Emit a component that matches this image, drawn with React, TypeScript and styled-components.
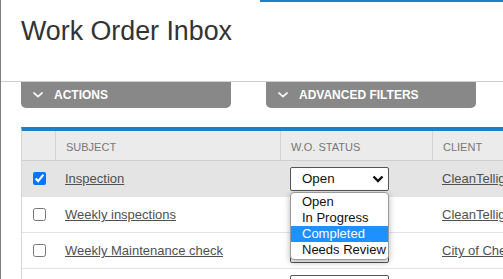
import React from "react";
import styled, { createGlobalStyle } from "styled-components";

const GlobalStyle = createGlobalStyle`
    html, body {
        margin: 0;
        padding: 0;
        background: #fff;
        font-family: "Liberation Sans", Arial, sans-serif;
        overflow: hidden;
    }
`

const Page = styled.div`
    box-sizing: border-box;
    height: 279px;
    border-left: 1px solid #7d7d7d;
    overflow: hidden;
`

const TopStrip = styled.div`
    height: 2px;
    margin-left: 259px;
    background-color: #1e80c4;
`

const Header = styled.div`
    box-sizing: border-box;
    height: 80px;
    padding: 16px 0 0 20px;
    border-bottom: 1px solid #cfcfcf;
`

const Title = styled.h1`
    margin: 0;
    font-size: 26.8px;
    line-height: 27px;
    font-weight: normal;
    color: #333;
`

const ButtonRow = styled.div`
    display: flex;
    gap: 35px;
    padding-left: 20px;
`

const PanelButton = styled.div`
    box-sizing: border-box;
    width: 210px;
    height: 26px;
    display: flex;
    align-items: center;
    gap: 11px;
    padding-left: 12px;
    background-color: #888888;
    border-radius: 0 0 5px 5px;
    color: #fff;
    font-size: 12px;
    font-weight: bold;
`

const Table = styled.div`
    margin: 19px 0 0 20px;
    width: 560px;
    border-top: 4px solid #1e80c4;
    border-left: 1px solid #d6d6d6;
`

const Row = styled.div<{ $head?: boolean; $selected?: boolean }>`
    display: grid;
    grid-template-columns: 33px 225px 152px 1fr;
    height: ${(p) => (p.$head ? "29px" : "35px")};
    border-bottom: 1px solid ${(p) => (p.$head ? "#cfcfcf" : "#e3e3e3")};
    background-color: ${(p) => (p.$head ? "#ebebeb" : p.$selected ? "#e4e4e4" : "#fff")};
`

const HeadCell = styled.div<{ $first?: boolean }>`
    display: flex;
    align-items: center;
    padding: 3px 0 0 10px;
    border-left: ${(p) => (p.$first ? "none" : "1px solid #d4d4d4")};
    font-size: 11px;
    color: #777;
    white-space: nowrap;
`

const Cell = styled.div<{ $pad?: number }>`
    display: flex;
    align-items: center;
    padding-left: ${(p) => p.$pad ?? 10}px;
    white-space: nowrap;
    overflow: visible;
`

const Check = styled.input`
    width: 13px;
    height: 13px;
    margin: 0;
`

const TextLink = styled.a`
    font-size: 13px;
    color: #505050;
    text-decoration: underline;
    cursor: pointer;
`

const SelectWrap = styled.div`
    position: relative;
    width: 99px;
    height: 24px;
`

const SelectBox = styled.div`
    box-sizing: border-box;
    width: 99px;
    height: 24px;
    display: flex;
    align-items: center;
    padding-left: 11px;
    border: 1px solid #555;
    border-radius: 2px;
    background: #fff;
    font-size: 13.33px;
    color: #111;
`

const SelectArrow = styled.svg`
    position: absolute;
    right: 5px;
    top: 8px;
`

const OptionList = styled.div`
    position: absolute;
    z-index: 2;
    left: 0;
    top: 25px;
    box-sizing: border-box;
    width: 99px;
    padding: 1px 0;
    background: #fff;
    border: 1px solid #9a9a9a;
    border-radius: 4px;
    box-shadow: 0 2px 6px rgba(0, 0, 0, 0.3);
`

const OptionItem = styled.div<{ $active?: boolean }>`
    height: 16px;
    line-height: 16px;
    padding-left: 11px;
    font-size: 13px;
    color: ${(p) => (p.$active ? "#fff" : "#111")};
    background-color: ${(p) => (p.$active ? "#1e90ff" : "transparent")};
`

const Chevron = ({ color, size }: { color: string; size: number }) => (
    <svg width={size} height={size * 0.6} viewBox="0 0 10 6">
        <path d="M1 1 L5 4.6 L9 1" fill="none" stroke={color} strokeWidth="1.8" strokeLinecap="round" strokeLinejoin="round" />
    </svg>
)

const StatusSelect = ({ open }: { open?: boolean }) => (
    <SelectWrap>
        <SelectBox>Open</SelectBox>
        <SelectArrow width="12" height="8" viewBox="0 0 12 8">
            <path d="M1.5 1.5 L6 6 L10.5 1.5" fill="none" stroke="#111" strokeWidth="2.4" />
        </SelectArrow>
        {open && (
            <OptionList>
                <OptionItem>Open</OptionItem>
                <OptionItem>In Progress</OptionItem>
                <OptionItem $active>Completed</OptionItem>
                <OptionItem>Needs Review</OptionItem>
            </OptionList>
        )}
    </SelectWrap>
)

const rows = [
    { subject: "Inspection", client: "CleanTelligent", checked: true, open: true },
    { subject: "Weekly inspections", client: "CleanTelligent" },
    { subject: "Weekly Maintenance check", client: "City of Chesterfield" },
    { subject: "Monthly Walkthrough", client: "CleanTelligent" },
]

const App = () => (
    <>
        <GlobalStyle />
        <Page>
            <TopStrip />
            <Header>
                <Title>Work Order Inbox</Title>
            </Header>
            <ButtonRow>
                <PanelButton>
                    <Chevron color="#f2f2f2" size={10} />
                    ACTIONS
                </PanelButton>
                <PanelButton>
                    <Chevron color="#f2f2f2" size={10} />
                    ADVANCED FILTERS
                </PanelButton>
            </ButtonRow>
            <Table>
                <Row $head>
                    <HeadCell $first />
                    <HeadCell>SUBJECT</HeadCell>
                    <HeadCell>W.O. STATUS</HeadCell>
                    <HeadCell>CLIENT</HeadCell>
                </Row>
                {rows.map((r) => (
                    <Row key={r.subject} $selected={r.checked}>
                        <Cell $pad={11}>
                            <Check type="checkbox" defaultChecked={r.checked} />
                        </Cell>
                        <Cell>
                            <TextLink>{r.subject}</TextLink>
                        </Cell>
                        <Cell>
                            <StatusSelect open={r.open} />
                        </Cell>
                        <Cell>
                            <TextLink>{r.client}</TextLink>
                        </Cell>
                    </Row>
                ))}
            </Table>
        </Page>
    </>
);

export default App;
